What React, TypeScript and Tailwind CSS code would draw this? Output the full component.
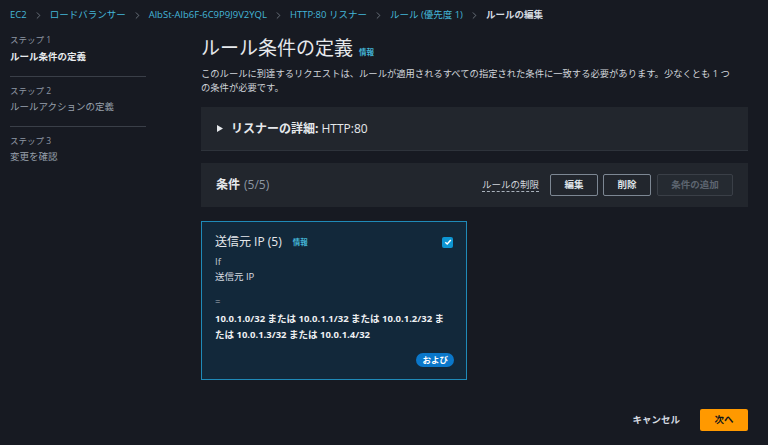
import { ChevronRight } from 'lucide-react';

const font = { fontFamily: '"Open Sans", "Noto Sans CJK JP", sans-serif' };

const crumbs = ['EC2', 'ロードバランサー', 'AlbSt-Alb6F-6C9P9J9V2YQL', 'HTTP:80 リスナー', 'ルール (優先度 1)'];

const steps = [
  { label: 'ステップ 1', title: 'ルール条件の定義', active: true },
  { label: 'ステップ 2', title: 'ルールアクションの定義', active: false },
  { label: 'ステップ 3', title: '変更を確認', active: false },
];

export default function App() {
  return (
    <div className="w-[768px] h-[445px] overflow-hidden bg-[#171a22] text-[#d1d5db]" style={font}>
      {/* Breadcrumbs */}
      <div className="h-[30px] flex items-center pl-[10px] text-[9.5px]">
        {crumbs.map((c) => (
          <div key={c} className="flex items-center">
            <span className="text-[#44b6d8]">{c}</span>
            <ChevronRight className="w-[11px] h-[11px] mx-[6px] text-[#8b949e]" strokeWidth={1.5} />
          </div>
        ))}
        <span className="font-bold text-[#d5dbe1]">ルールの編集</span>
      </div>

      <div className="flex">
        {/* Steps */}
        <div className="w-[201px] shrink-0 pl-[10px] pt-[3px]">
          <div className="w-[136px]">
            {steps.map((s, i) => (
              <div key={s.label}>
                {i > 0 && <div className="h-px bg-[#3a3f48]" />}
                <div className={i > 0 ? 'pt-[7px] pb-[12px]' : 'pb-[12px]'}>
                  <div className="text-[8.5px] leading-[14px] text-[#8d96a3]">{s.label}</div>
                  <div
                    className={
                      s.active
                        ? 'mt-[3px] text-[9.5px] leading-[14px] font-bold text-[#e8ebee]'
                        : 'mt-[2px] text-[9.5px] leading-[14px] text-[#98a1ad]'
                    }
                  >
                    {s.title}
                  </div>
                </div>
              </div>
            ))}
          </div>
        </div>

        {/* Main */}
        <div className="w-[547px] pt-[6px]">
          <div className="flex items-baseline gap-[6px] leading-[24px]">
            <h1 className="text-[19px] text-[#e6e9ec]">ルール条件の定義</h1>
            <span className="text-[7.5px] font-bold text-[#44b6d8]">情報</span>
          </div>
          <p className="mt-[3px] text-[9.3px] leading-[14px] text-[#d1d5db]">
            このルールに到達するリクエストは、ルールが適用されるすべての指定された条件に一致する必要があります。少なくとも 1 つ
            <br />
            の条件が必要です。
          </p>

          <div className="mt-[12px] h-[44px] bg-[#22262d] border-b border-[#2e333b] flex items-center pl-[16px]">
            <svg width="6" height="7" viewBox="0 0 6 7" className="mr-[8px]">
              <path d="M0 0 L6 3.5 L0 7 Z" fill="#e6e9ec" />
            </svg>
            <span className="text-[12px] font-bold text-[#e6e9ec]">リスナーの詳細: </span>
            <span className="text-[12px] text-[#e6e9ec] ml-[3px]">HTTP:80</span>
          </div>

          <div className="mt-[12px] h-[44px] bg-[#22262d] flex items-center pl-[15px] pr-[15px]">
            <span className="text-[12px] font-bold text-[#e6e9ec]">条件</span>
            <span className="text-[12px] text-[#8d96a3] ml-[4px]">(5/5)</span>
            <div className="flex-1" />
            <span className="text-[9.5px] text-[#d1d5db] border-b border-dashed border-[#aab2bc] leading-[13px] mr-[11px]">
              ルールの制限
            </span>
            <button className="w-[48px] h-[22px] border border-[#7d8793] rounded-[2px] text-[9.5px] font-bold text-[#dfe3e7]">
              編集
            </button>
            <button className="ml-[5px] w-[48px] h-[22px] border border-[#7d8793] rounded-[2px] text-[9.5px] font-bold text-[#dfe3e7]">
              削除
            </button>
            <button className="ml-[6px] w-[76px] h-[22px] border border-[#3a3f47] bg-[#252a31] rounded-[2px] text-[9.5px] font-bold text-[#5d6570]">
              条件の追加
            </button>
          </div>

          {/* Condition card */}
          <div className="mt-[14px] w-[266px] h-[159px] bg-[#12283a] border border-[#1f8ab8] pl-[13px] pr-[12px] pt-[12px]">
            <div className="flex items-center leading-[16px]">
              <span className="text-[12px] text-[#e6e9ec]">送信元 IP (5)</span>
              <span className="ml-[11px] text-[7.5px] font-bold text-[#44b6d8]">情報</span>
              <div className="flex-1" />
              <div className="w-[11px] h-[11px] rounded-[2px] bg-[#0d95d2] flex items-center justify-center mr-[1px]">
                <svg width="8" height="8" viewBox="0 0 8 8">
                  <path d="M1.3 4.2 L3.2 6 L6.8 2" stroke="#fff" strokeWidth="1.5" fill="none" />
                </svg>
              </div>
            </div>
            <div className="mt-[4px] text-[9.5px] leading-[15px] text-[#c3cad3]">If</div>
            <div className="text-[9.5px] leading-[15px] text-[#d9dde2]">送信元 IP</div>
            <div className="mt-[10px] text-[9.5px] leading-[15px] text-[#aab2bc]">=</div>
            <div className="mt-[1.5px] mr-[6px] text-[9.5px] leading-[16px] font-bold text-[#eef0f2]">
              10.0.1.0/32 または 10.0.1.1/32 または 10.0.1.2/32 または 10.0.1.3/32 または 10.0.1.4/32
            </div>
            <div className="mt-[10px] flex justify-end">
              <span className="h-[14px] px-[6px] rounded-full bg-[#0a77c9] text-[8.5px] font-bold text-white leading-[14px]">
                および
              </span>
            </div>
          </div>

          {/* Footer */}
          <div className="mt-[29px] flex items-center justify-end">
            <span className="text-[9.5px] font-bold text-[#d5dbe1] mr-[20px]">キャンセル</span>
            <button className="w-[48px] h-[22px] bg-[#ff9900] rounded-[2px] text-[9.5px] font-bold text-[#0f141a]">
              次へ
            </button>
          </div>
        </div>
      </div>
    </div>
  );
}
